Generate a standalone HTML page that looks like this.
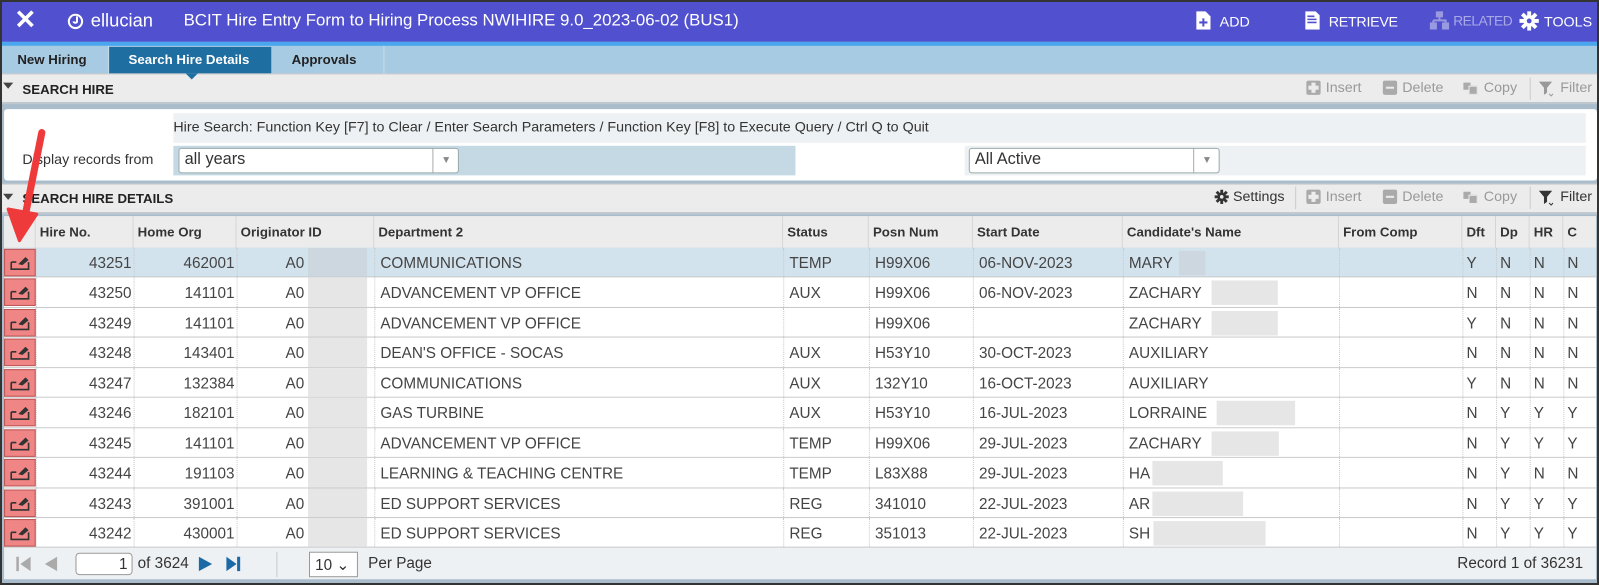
<!DOCTYPE html>
<html><head><meta charset="utf-8"><style>
*{box-sizing:border-box;margin:0;padding:0}
body{width:1599px;height:585px;overflow:hidden;background:#a9bccb;font-family:"Liberation Sans",Arial,sans-serif;position:relative;color:#333}
#w{position:absolute;left:0;top:0;width:1568px;height:574px;transform:scale(1.0198);transform-origin:0 0}
.a{position:absolute}
.top{left:0;top:0;width:1568px;height:41px;background:#5151cf;color:#fff}
.hdr{background:#ececec;border-top:1px solid #c8c8c8;border-bottom:2px solid #bfc8cf}
.ttl{font-weight:bold;font-size:13px;color:#222}
.tb{position:absolute;font-size:14px;color:#999}
.gi{position:absolute;width:14px;height:14px;background:#aaa;border-radius:2px}
.th{font-weight:bold;font-size:13px;color:#333;top:212px;height:31px;background:#ececec;border-right:1px solid #d4d4d4;padding:8px 0 0 4px}
.row{left:4px;width:1561px;height:30px;border-bottom:1px solid #c9c9c9;background:#fff}
.c{position:absolute;top:7px;font-size:15px;color:#444;white-space:nowrap}
.vl{position:absolute;top:0;bottom:0;border-left:1px dotted #c8c8c8}
.ic{position:absolute;left:0;top:1px;width:31px;height:27px;background:#f08585;border:1px solid #b55}
.rd{position:absolute;background:#e6e6e6}
</style></head><body>
<div class="a" style="left:0;top:0;width:1599px;height:585px;border:2px solid #333;z-index:50;pointer-events:none"></div>
<div id="w">
<div class="a top">
 <div class="a" style="left:14px;top:4px;font-size:26px;font-weight:bold">✕</div>
 <svg class="a" style="left:66px;top:13px" width="16" height="16" viewBox="0 0 16 16"><circle cx="8" cy="8" r="6.5" fill="none" stroke="#fff" stroke-width="2"/><path d="M9.5 3 L9.5 8.5 A2 2 0 0 1 6 8" fill="none" stroke="#fff" stroke-width="2"/></svg>
 <div class="a" style="left:89px;top:10px;font-size:18px">ellucian</div>
 <div class="a" style="left:180px;top:11px;font-size:16.5px">BCIT Hire Entry Form to Hiring Process NWIHIRE 9.0_2023-06-02 (BUS1)</div>
 <svg class="a" style="left:1173px;top:11px" width="14" height="18"><path d="M0 0H9L14 5V18H0Z" fill="#fff"/><path d="M7 7V15M3 11H11" stroke="#5151cf" stroke-width="2"/></svg>
 <div class="a" style="left:1196px;top:13px;font-size:14px">ADD</div>
 <svg class="a" style="left:1279px;top:11px" width="16" height="18"><path d="M1 0H11L15 4V18H1Z" fill="#fff"/><path d="M3 5H10M3 8H12M3 11H12" stroke="#5151cf" stroke-width="1.5"/></svg>
 <div class="a" style="left:1303px;top:13px;font-size:14px;letter-spacing:-0.3px">RETRIEVE</div>
 <svg class="a" style="left:1402px;top:11px" width="19" height="18" fill="#9a9ae0"><rect x="6" y="0" width="7" height="6"/><rect x="0" y="11" width="7" height="7"/><rect x="12" y="11" width="7" height="7"/><path d="M9.5 6V9M3.5 9H15.5V11M3.5 9V11" stroke="#9a9ae0" stroke-width="2" fill="none"/></svg>
 <div class="a" style="left:1425px;top:13px;font-size:13.5px;letter-spacing:-0.5px;color:#a9a9e6">RELATED</div>
 <svg class="a" style="left:1490px;top:11px" width="19" height="19" viewBox="0 0 20 20"><g fill="#fff"><circle cx="10" cy="10" r="6"/><rect x="8" y="0" width="4" height="20"/><rect x="0" y="8" width="20" height="4"/><rect x="8" y="0" width="4" height="20" transform="rotate(45 10 10)"/><rect x="8" y="0" width="4" height="20" transform="rotate(-45 10 10)"/></g><circle cx="10" cy="10" r="2.5" fill="#5151cf"/></svg>
 <div class="a" style="left:1514px;top:13px;font-size:14px">TOOLS</div>
</div>
<div class="a" style="left:0;top:41px;width:1568px;height:4px;background:#4aa6ef"></div>
<div class="a" style="left:0;top:45px;width:1568px;height:27px;background:#a8cbe4"></div>
<div class="a" style="left:2px;top:45px;width:105px;height:27px;background:#a8cbe4;border-right:1px solid #c8dcea"></div>
<div class="a ttl" style="left:17px;top:51px">New Hiring</div>
<div class="a" style="left:107px;top:46px;width:159px;height:26px;background:#1f6ea1"></div>
<div class="a ttl" style="left:126px;top:51px;color:#fff">Search Hire Details</div>
<div class="a" style="left:182px;top:72px;width:0;height:0;border-left:6px solid transparent;border-right:6px solid transparent;border-top:6px solid #1f6ea1;z-index:3"></div>
<div class="a ttl" style="left:286px;top:51px">Approvals</div>
<div class="a" style="left:376px;top:45px;height:27px;border-left:1px solid #c8dcea"></div>

<div class="a hdr" style="left:2px;top:72px;width:1566px;height:30px"></div>
<div class="a" style="left:3px;top:81px;border-left:5px solid transparent;border-right:5px solid transparent;border-top:6px solid #444"></div>
<div class="a ttl" style="left:22px;top:80px">SEARCH HIRE</div>
<div id="tb1" class="a" style="left:0;top:77px;width:1568px;height:20px"></div>

<div class="a" style="left:4px;top:107px;width:1562px;height:70px;background:#fff;border-radius:3px"></div>
<div class="a" style="left:170px;top:111px;width:1385px;height:29px;background:#eef1f3"></div>
<div class="a" style="left:170px;top:116px;font-size:14px;color:#333">Hire Search: Function Key [F7] to Clear / Enter Search Parameters / Function Key [F8] to Execute Query / Ctrl Q to Quit</div>
<div class="a" style="left:22px;top:148px;font-size:14px;color:#333">Display records from</div>
<div class="a" style="left:170px;top:143px;width:610px;height:29px;background:#c5d9e5"></div>
<div class="a" style="left:175px;top:145px;width:275px;height:25px;background:#fff;border:1px solid #9aa;border-radius:3px"></div>
<div class="a" style="left:424px;top:145px;width:26px;height:25px;border-left:1px solid #aaa;color:#888;font-size:10px;text-align:center;padding-top:7px">▼</div>
<div class="a" style="left:181px;top:148px;font-size:16px">all years</div>
<div class="a" style="left:946px;top:143px;width:609px;height:29px;background:#eef1f3"></div>
<div class="a" style="left:950px;top:145px;width:246px;height:25px;background:#fff;border:1px solid #9aa;border-radius:3px"></div>
<div class="a" style="left:1170px;top:145px;width:26px;height:25px;border-left:1px solid #aaa;color:#888;font-size:10px;text-align:center;padding-top:7px">▼</div>
<div class="a" style="left:956px;top:148px;font-size:16px">All Active</div>

<div class="a hdr" style="left:2px;top:180px;width:1566px;height:30px"></div>
<div class="a" style="left:3px;top:190px;border-left:5px solid transparent;border-right:5px solid transparent;border-top:6px solid #444"></div>
<div class="a ttl" style="left:22px;top:187px">SEARCH HIRE DETAILS</div>
<svg class="a" style="left:1191px;top:186px" width="14" height="14" viewBox="0 0 20 20"><g fill="#333"><circle cx="10" cy="10" r="6"/><rect x="8" y="0" width="4" height="20"/><rect x="0" y="8" width="20" height="4"/><rect x="8" y="0" width="4" height="20" transform="rotate(45 10 10)"/><rect x="8" y="0" width="4" height="20" transform="rotate(-45 10 10)"/></g><circle cx="10" cy="10" r="2.5" fill="#ececec"/></svg>
<div class="a" style="left:1209px;top:184px;font-size:14px;color:#333">Settings</div>
<div class="a" style="left:1270px;top:183px;height:22px;border-left:1px solid #ccc"></div>
<div id="tb2" class="a" style="left:0;top:184px;width:1568px;height:20px"></div>

<div class="a" style="left:4px;top:212px;width:1561px;height:31px;background:#ececec;border-bottom:1px solid #c9c9c9"></div>
<div class="a th" style="left:4px;width:31px"></div>
<div class="a th" style="left:35px;width:96px">Hire No.</div>
<div class="a th" style="left:131px;width:101px">Home Org</div>
<div class="a th" style="left:232px;width:135px">Originator ID</div>
<div class="a th" style="left:367px;width:401px">Department 2</div>
<div class="a th" style="left:768px;width:84px">Status</div>
<div class="a th" style="left:852px;width:102px">Posn Num</div>
<div class="a th" style="left:954px;width:147px">Start Date</div>
<div class="a th" style="left:1101px;width:212px">Candidate's Name</div>
<div class="a th" style="left:1313px;width:121px">From Comp</div>
<div class="a th" style="left:1434px;width:33px">Dft</div>
<div class="a th" style="left:1467px;width:33px">Dp</div>
<div class="a th" style="left:1500px;width:33px">HR</div>
<div class="a th" style="left:1533px;width:32px;border-right:none">C</div>

<div id="rows"></div>
<script>
function tb(dark){
 var fc=dark?"#333":"#999";
 return '<div class="gi" style="left:1281px;top:2px"></div><div style="position:absolute;left:1286px;top:4px;width:4px;height:10px;background:#ececec"></div><div style="position:absolute;left:1283px;top:7px;width:10px;height:4px;background:#ececec"></div><div class="tb" style="left:1300px;top:0">Insert</div>'+
 '<div class="gi" style="left:1356px;top:2px"></div><div style="position:absolute;left:1359px;top:8px;width:8px;height:2px;background:#ececec"></div><div class="tb" style="left:1375px;top:0">Delete</div>'+
 '<div style="position:absolute;left:1435px;top:4px;width:7px;height:7px;background:#aaa"></div><div style="position:absolute;left:1440px;top:7px;width:9px;height:9px;background:#aaa;border:1px solid #ececec"></div><div class="tb" style="left:1455px;top:0">Copy</div>'+
 '<div style="position:absolute;left:1500px;top:-1px;height:22px;border-left:1px solid #ccc"></div>'+
 '<svg style="position:absolute;left:1509px;top:2px" width="14" height="16"><path d="M0 1H13L8 7V12L5 14V7Z" fill="'+fc+'"/><path d="M10 13L12 15L14 13" fill="none" stroke="'+fc+'"/></svg><div class="tb" style="left:1530px;top:0;color:'+fc+'">Filter</div>';
}
document.getElementById("tb1").innerHTML=tb(false);
document.getElementById("tb2").innerHTML=tb(true);
var d=[
["43251","462001","COMMUNICATIONS","TEMP","H99X06","06-NOV-2023","MARY",1156,26,"YNNN"],
["43250","141101","ADVANCEMENT VP OFFICE","AUX","H99X06","06-NOV-2023","ZACHARY",1188,65,"NNNN"],
["43249","141101","ADVANCEMENT VP OFFICE","","H99X06","","ZACHARY",1188,65,"YNNN"],
["43248","143401","DEAN'S OFFICE - SOCAS","AUX","H53Y10","30-OCT-2023","AUXILIARY",0,0,"NNNN"],
["43247","132384","COMMUNICATIONS","AUX","132Y10","16-OCT-2023","AUXILIARY",0,0,"YNNN"],
["43246","182101","GAS TURBINE","AUX","H53Y10","16-JUL-2023","LORRAINE",1193,77,"NYYY"],
["43245","141101","ADVANCEMENT VP OFFICE","TEMP","H99X06","29-JUL-2023","ZACHARY",1188,66,"NYYY"],
["43244","191103","LEARNING & TEACHING CENTRE","TEMP","L83X88","29-JUL-2023","HA",1130,69,"NYNN"],
["43243","391001","ED SUPPORT SERVICES","REG","341010","22-JUL-2023","AR",1130,89,"NYYY"],
["43242","430001","ED SUPPORT SERVICES","REG","351013","22-JUL-2023","SH",1131,110,"NYYY"]];
var tops=[243,272,302,331,361,390,420,449,479,508];
var h="";
d.forEach(function(r,i){
var t=tops[i];var bg=i==0?"#d3e3ee":"#fff";
h+='<div class="a row" style="top:'+t+'px;height:'+(i==9?29:(tops[i+1]-t))+'px;background:'+bg+'">';
[31,127,228,363,764,848,950,1097,1309,1430,1463,1496,1529].forEach(function(x){h+='<div class="vl" style="left:'+x+'px"></div>'});
h+='<div class="ic"><svg width="29" height="25"><path d="M6 12H11M6 12V19H23V12" fill="none" stroke="#333" stroke-width="1.6"/><path d="M13 14L20 7L23 10L17 15Z" fill="#333"/></svg></div>';
h+='<div class="c" style="right:'+(1561-125)+'px">'+r[0]+'</div>';
h+='<div class="c" style="right:'+(1561-226)+'px">'+r[1]+'</div>';
h+='<div class="c" style="left:276px">A0</div>';
h+='<div class="rd" style="left:298px;width:58px;top:0;bottom:0;background:'+(i==0?"#ccd7df":"#e6e6e6")+'"></div>';
h+='<div class="c" style="left:369px">'+r[2]+'</div>';
h+='<div class="c" style="left:770px">'+r[3]+'</div>';
h+='<div class="c" style="left:854px">'+r[4]+'</div>';
h+='<div class="c" style="left:956px">'+r[5]+'</div>';
h+='<div class="c" style="left:1103px">'+r[6]+'</div>';
if(r[8])h+='<div class="rd" style="left:'+(r[7]-4)+'px;width:'+r[8]+'px;top:3px;height:24px;background:'+(i==0?"#ccd7df":"#e6e6e6")+'"></div>';
[1436,1469,1502,1535].forEach(function(x,k){h+='<div class="c" style="left:'+(x-2)+'px">'+r[9][k]+'</div>'});
h+='</div>';});
document.getElementById("rows").innerHTML=h;
</script>

<div class="a" style="left:4px;top:537px;width:1561px;height:31px;background:#eef1f3"></div>
<svg class="a" style="left:16px;top:545px" width="48" height="16"><path d="M1 1V15" stroke="#aaa" stroke-width="3"/><path d="M14 1L4 8L14 15Z" fill="#aaa"/><path d="M40 1L28 8L40 15Z" fill="#aaa"/></svg>
<div class="a" style="left:74px;top:542px;width:56px;height:22px;background:#fff;border:1px solid #999;border-radius:4px;font-size:15px;text-align:right;padding:2px 4px 0 0">1</div>
<div class="a" style="left:135px;top:544px;font-size:15px">of 3624</div>
<svg class="a" style="left:194px;top:545px" width="48" height="16"><path d="M1 1L14 8L1 15Z" fill="#1b6aa6"/><path d="M28 1L38 8L28 15Z" fill="#1b6aa6"/><path d="M40 1V15" stroke="#1b6aa6" stroke-width="3"/></svg>
<div class="a" style="left:271px;top:541px;height:25px;border-left:1px solid #ccc"></div>
<div class="a" style="left:303px;top:541px;width:48px;height:25px;background:#fff;border:1px solid #999;font-size:15px;padding:3px 0 0 5px">10 ⌄</div>
<div class="a" style="left:361px;top:544px;font-size:15px">Per Page</div>
<div class="a" style="left:1429px;top:544px;font-size:15px">Record 1 of 36231</div>

<svg class="a" style="left:0;top:0;z-index:20" width="80" height="250"><path d="M41 130L24 215" stroke="#ee3a3a" stroke-width="7" stroke-linecap="round"/><path d="M8 205L19 236L36 210Z" fill="#ee3a3a" stroke="#ee3a3a" stroke-width="3" stroke-linejoin="round"/></svg>
</div>
</body></html>
